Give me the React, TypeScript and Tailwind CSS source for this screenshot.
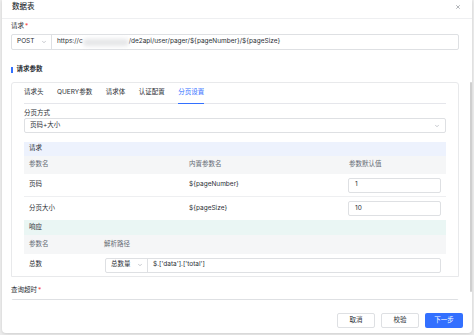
import { ChevronDown, X } from 'lucide-react';

const tabs = ['请求头', 'QUERY参数', '请求体', '认证配置', '分页设置'];

function Label({ text, required }: { text: string; required?: boolean }) {
  return (
    <div className="leading-[10px] h-[10px]">
      {text}
      {required && <span className="text-[#f54a45] ml-[1px]">*</span>}
    </div>
  );
}

function Input({ value, className = '' }: { value: string; className?: string }) {
  return (
    <div
      className={`h-[15px] flex items-center px-[6px] border border-[#dee0e3] rounded-[2px] bg-white ${className}`}
    >
      {value}
    </div>
  );
}

export default function App() {
  return (
    <div className="w-[474px] h-[335px] bg-[#ececec] px-[2px] pb-[2px] font-['Inter','Noto_Sans_CJK_SC',sans-serif] text-[6.5px] text-[#2b2f36]">
      <div className="relative h-full flex flex-col bg-white rounded-b-[4px] shadow-[0_1px_3px_rgba(0,0,0,0.12)]">
        {/* Header */}
        <div className="h-[19px] shrink-0 flex justify-between items-start pt-[1px] pl-[10px] pr-[11px] border-b border-[#eeeff1]">
          <span className="text-[7.5px] leading-[11px] font-medium">数据表</span>
          <X className="w-[6px] h-[6px] mt-[3px] text-[#646a73]" strokeWidth={2} />
        </div>

        {/* Body */}
        <div className="flex-1 overflow-hidden pl-[9px] pr-[13px]">
          <div className="mt-[2px]">
            <Label text="请求" required />
          </div>
          <div className="mt-[3px] flex h-[16px] border border-[#dee0e3] rounded-[2px]">
            <div className="w-[40px] shrink-0 flex items-center justify-between pl-[5px] pr-[4px] border-r border-[#dee0e3]">
              <span>POST</span>
              <ChevronDown className="w-[6px] h-[6px] text-[#8f959e]" />
            </div>
            <div className="flex-1 flex items-center pl-[5px]">
              <span>https://c</span>
              <span className="inline-block w-[46px] h-[7px] bg-[#e4e5e7] blur-[2px] rounded-full" />
              <span>/de2api/user/pager/${'{'}pageNumber{'}'}/${'{'}pageSize{'}'}</span>
            </div>
          </div>

          {/* Section title */}
          <div className="mt-[15px] flex items-center h-[10px] gap-[4px]">
            <span className="w-[1.5px] h-[6px] bg-[#3370ff]" />
            <span className="font-semibold">请求参数</span>
          </div>

          {/* Tabs panel */}
          <div className="mt-[7px] border border-[#e8e9eb] rounded-t-[3px] px-[12px]">
            <div className="flex gap-[13.5px] h-[21px] border-b border-[#e5e6eb]">
              {tabs.map((t) => (
                <div
                  key={t}
                  className={`relative h-[20px] flex items-center ${t === '分页设置' ? 'text-[#3370ff]' : ''}`}
                >
                  {t}
                  {t === '分页设置' && (
                    <span className="absolute left-0 right-0 bottom-[-1px] h-[1.5px] bg-[#3370ff]" />
                  )}
                </div>
              ))}
            </div>

            <div className="mt-[4px]">
              <Label text="分页方式" />
            </div>
            <div className="h-[15px] flex items-center justify-between pl-[5px] pr-[5px] border border-[#dee0e3] rounded-[2px]">
              <span>页码+大小</span>
              <ChevronDown className="w-[6px] h-[6px] text-[#8f959e]" />
            </div>

            {/* Request table */}
            <div className="mt-[9px]">
              <div className="h-[14px] flex items-center pl-[5px] bg-[#edf2fd]">请求</div>
              <div className="h-[18px] grid grid-cols-[160px_159px_1fr] items-center pl-[5px] bg-[#f5f6f7] text-[#646a73]">
                <span>参数名</span>
                <span>内置参数名</span>
                <span className="pl-[1px]">参数默认值</span>
              </div>
              <div className="h-[23px] grid grid-cols-[160px_159px_1fr] items-center pl-[5px] pr-[5px] border-b border-[#eeeff1]">
                <span>页码</span>
                <span>${'{'}pageNumber{'}'}</span>
                <Input value="1" />
              </div>
              <div className="h-[23px] grid grid-cols-[160px_159px_1fr] items-center pl-[5px] pr-[5px]">
                <span>分页大小</span>
                <span>${'{'}pageSize{'}'}</span>
                <Input value="10" />
              </div>

              {/* Response table */}
              <div className="h-[15px] flex items-center pl-[5px] bg-[#eaf6f4]">响应</div>
              <div className="h-[19px] grid grid-cols-[75px_1fr] items-center pl-[5px] bg-[#f5f6f7] text-[#646a73]">
                <span>参数名</span>
                <span>解析路径</span>
              </div>
              <div className="h-[22px] grid grid-cols-[76px_1fr] items-center pl-[5px] pr-[5px]">
                <span>总数</span>
                <div className="flex h-[15px] border border-[#dee0e3] rounded-[2px]">
                  <div className="w-[42px] shrink-0 flex items-center justify-between pl-[5px] pr-[4px] border-r border-[#dee0e3]">
                    <span>总数量</span>
                    <ChevronDown className="w-[6px] h-[6px] text-[#8f959e]" />
                  </div>
                  <div className="flex-1 flex items-center pl-[5px]">$.['data'].['total']</div>
                </div>
              </div>
            </div>
          </div>

          <div className="mt-[8px]">
            <Label text="查询超时" required />
          </div>
          <div className="mt-[4px] flex h-[16px] border border-[#dee0e3] rounded-[2px]">
            <div className="flex-1" />
            <div className="w-[26px] border-l border-[#dee0e3]" />
          </div>
        </div>

        {/* Footer */}
        <div className="h-[33px] shrink-0 flex justify-end items-start pt-[13px] pr-[9px] gap-[6px]">
          <button className="w-[38px] h-[15px] border border-[#dee0e3] rounded-[2px] bg-white">取消</button>
          <button className="w-[38px] h-[15px] border border-[#dee0e3] rounded-[2px] bg-white">校验</button>
          <button className="w-[38px] h-[15px] rounded-[2px] bg-[#3370ff] text-white">下一步</button>
        </div>

        {/* Scrollbar thumb */}
        <div className="absolute right-[0px] top-[82px] w-[2.5px] h-[210px] rounded-full bg-[#cfcfcf]" />
      </div>
    </div>
  );
}
